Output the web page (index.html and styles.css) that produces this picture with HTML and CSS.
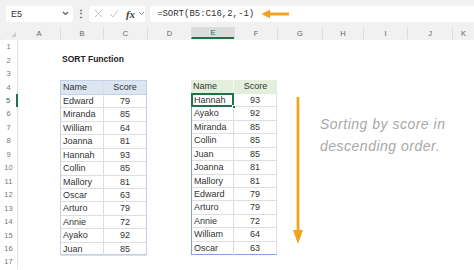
FILE: index.html
```html
<!DOCTYPE html>
<html>
	<head>
		<meta charset="utf-8">
		<title>SORT Function</title>
		<link rel="stylesheet" href="styles.css">
	</head>
	<body>
	<div class="toolbar">
		<div class="namebox">
			<span>E5</span>
			<svg class="chev" width="7" height="5" viewBox="0 0 7 5"><path d="M1 1l2.5 2.5L6 1" fill="none" stroke="#555" stroke-width="1.1"/></svg>
		</div>
		<div class="grip">⋮</div>
		<div class="fxbox">
			<svg width="9" height="9" viewBox="0 0 9 9"><path d="M1 1l7 7M8 1L1 8" stroke="#c4c4c4" stroke-width="1"/></svg>
			<svg width="10" height="9" viewBox="0 0 10 9"><path d="M1 5l3 3 5-7" fill="none" stroke="#c4c4c4" stroke-width="1"/></svg>
			<i class="fx">fx</i>
			<svg class="chev" width="7" height="5" viewBox="0 0 7 5"><path d="M1 1l2.5 2.5L6 1" fill="none" stroke="#888" stroke-width="1"/></svg>
		</div>
		<div class="formula">
			<span>=SORT(B5:C16,2,-1)</span>
			<svg class="harrow" width="29" height="10" viewBox="0 0 29 10"><path d="M9 3.6h19v2.8H9z M0.5 5L9 0.5v9z" fill="#f2a51c"/></svg>
		</div>
	</div>
	<div class="colheads">
		<div class="corner"></div>
		<div>A</div><div>B</div><div>C</div><div>D</div>
		<div class="active">E</div>
		<div>F</div><div>G</div><div>H</div><div>I</div><div>J</div><div>K</div>
		<div></div>
	</div>
	<div class="sheet">
		<div class="rowheads">
			<div>1</div><div>2</div><div>3</div><div>4</div>
			<div class="active">5</div>
			<div>6</div><div>7</div><div>8</div><div>9</div><div>10</div>
			<div>11</div><div>12</div><div>13</div><div>14</div><div>15</div><div>16</div><div>17</div>
		</div>
		<div class="title">SORT Function</div>
		<div class="tbl src">
			<div class="hd">Name</div><div class="hd num">Score</div>
			<div>Edward</div><div class="num">79</div>
			<div>Miranda</div><div class="num">85</div>
			<div>William</div><div class="num">64</div>
			<div>Joanna</div><div class="num">81</div>
			<div>Hannah</div><div class="num">93</div>
			<div>Collin</div><div class="num">85</div>
			<div>Mallory</div><div class="num">81</div>
			<div>Oscar</div><div class="num">63</div>
			<div>Arturo</div><div class="num">79</div>
			<div>Annie</div><div class="num">72</div>
			<div>Ayako</div><div class="num">92</div>
			<div>Juan</div><div class="num">85</div>
		</div>
		<div class="tbl out">
			<div class="hd">Name</div><div class="hd num">Score</div>
			<div class="spill">
				<div class="sel">Hannah<span class="handle"></span></div><div class="num">93</div>
				<div>Ayako</div><div class="num">92</div>
				<div>Miranda</div><div class="num">85</div>
				<div>Collin</div><div class="num">85</div>
				<div>Juan</div><div class="num">85</div>
				<div>Joanna</div><div class="num">81</div>
				<div>Mallory</div><div class="num">81</div>
				<div>Edward</div><div class="num">79</div>
				<div>Arturo</div><div class="num">79</div>
				<div>Annie</div><div class="num">72</div>
				<div>William</div><div class="num">64</div>
				<div>Oscar</div><div class="num">63</div>
			</div>
		</div>
		<div class="varrow">
			<svg width="12" height="148" viewBox="0 0 12 148"><path d="M4.6 0h2.8v134H4.6z M1 133h10l-5 14z" fill="#f2a51c"/></svg>
		</div>
		<div class="note">Sorting by score in<br>descending order.</div>
	</div>
	</body>
</html>
```
FILE: styles.css
```css
*{ margin: 0; padding: 0; box-sizing: border-box; }
body{ width: 474px; height: 270px; overflow: hidden; background: #fff; font-family: "Liberation Sans", Arial, sans-serif; color: #333; }

/* formula bar */
.toolbar{ display: flex; align-items: center; height: 27px; padding-left: 6px; background: #f1f1f1; }
.namebox{ display: flex; align-items: center; justify-content: space-between; width: 67px; height: 16px; padding: 0 4px 0 5px; background: #fff; border-radius: 3px; font-size: 9px; color: #333; }
.grip{ width: 16px; text-align: center; font-size: 10px; font-weight: bold; color: #555; }
.fxbox{ display: flex; align-items: center; gap: 6px; width: 56px; height: 16px; padding-left: 5px; background: #fff; border-radius: 3px; }
.fxbox .fx{ font-family: "Liberation Serif", serif; font-size: 11px; font-weight: bold; color: #444; margin-left: 1px; margin-right: -3px; }
.formula{ display: flex; align-items: center; flex: 1; height: 16px; margin-left: 5px; padding-left: 7px; background: #fff; border-radius: 3px 0 0 3px; font-family: "Liberation Mono", monospace; font-size: 9px; color: #333; }
.harrow{ margin-left: 7px; }

/* column headers */
.colheads, .sheet{ display: grid; grid-template-columns: 18px 42px 43px 44px 44px 43px 43px 45px 41px 44px 45px 1fr; }
.colheads{ height: 13px; background: #f1f1f1; font-size: 7.5px; color: #666; }
.colheads div{ display: flex; align-items: center; justify-content: center; border-left: 1px solid #dcdcdc; }
.colheads div:first-child, .colheads div:nth-child(2){ border-left: none; }
.colheads .corner{ position: relative; }
.colheads .corner::after{ content: ""; position: absolute; right: 2px; bottom: 2px; border-left: 5px solid transparent; border-bottom: 5px solid #cfcfcf; }
.colheads .active{ background: #dcdcdc; color: #217346; border-bottom: 2px solid #217346; }

/* sheet */
.sheet{ grid-template-rows: repeat(17, 13.46px); font-size: 9px; }
.rowheads{ grid-column: 1; grid-row: 1 / -1; display: grid; grid-template-rows: repeat(17, 13.46px); border-right: 1px solid #e1e1e1; font-size: 7.5px; color: #777; }
.rowheads div{ display: flex; align-items: center; justify-content: center; }
.rowheads .active{ color: #217346; border-right: 2px solid #217346; margin-right: -1px; }
.title{ grid-column: 3 / span 2; grid-row: 2; padding-left: 2px; line-height: 13.46px; font-weight: bold; font-size: 8.5px; color: #222; white-space: nowrap; }

.tbl{ grid-row: 4 / span 13; display: grid; grid-template-columns: 43px 1fr; grid-auto-rows: 13.46px; }
.tbl div{ line-height: 13px; padding-left: 2px; border-bottom: 1px solid #dedede; white-space: nowrap; }
.tbl div:nth-child(odd){ border-right: 1px solid #dedede; }
.tbl .num{ text-align: center; padding-left: 0; }
.tbl .hd{ color: #333; }
.src{ grid-column: 3 / span 2; border: 1px solid #c2d1e6; }
.src .hd{ background: #dce6f2; border-bottom-color: #c2d1e6; }
.out{ grid-column: 6 / span 2; grid-template-columns: 43px 1fr; }
.out .hd{ background: #e3efdc; border-bottom: none; }
.out .hd:nth-child(odd){ border-right-color: #f2f7ef; }
.out .spill{ grid-column: 1 / -1; grid-row: 2 / span 12; display: grid; grid-template-columns: 42px 1fr; grid-auto-rows: 13.46px; padding: 0; border: 1px solid #7fa3e0; border-top: none; }
.out .spill div:nth-last-child(-n+2){ border-bottom: none; }
.out .sel{ position: relative; }
.out .sel::before{ content: ""; position: absolute; left: -1px; top: -1px; right: -1px; bottom: -1px; border: 2px solid #217346; }
.out .handle{ position: absolute; right: -3px; bottom: -3px; width: 4px; height: 4px; background: #217346; border: 1px solid #fff; }

.varrow{ grid-column: 8; grid-row: 5 / span 12; margin: 3px 0 0 15px; }
.varrow svg{ display: block; }
.note{ grid-column: 9 / span 3; grid-row: 6 / span 3; margin: 6px 0 0 -2px; font-size: 14px; line-height: 22px; letter-spacing: 0.5px; font-style: italic; color: #a8a8a8; white-space: nowrap; }
```
